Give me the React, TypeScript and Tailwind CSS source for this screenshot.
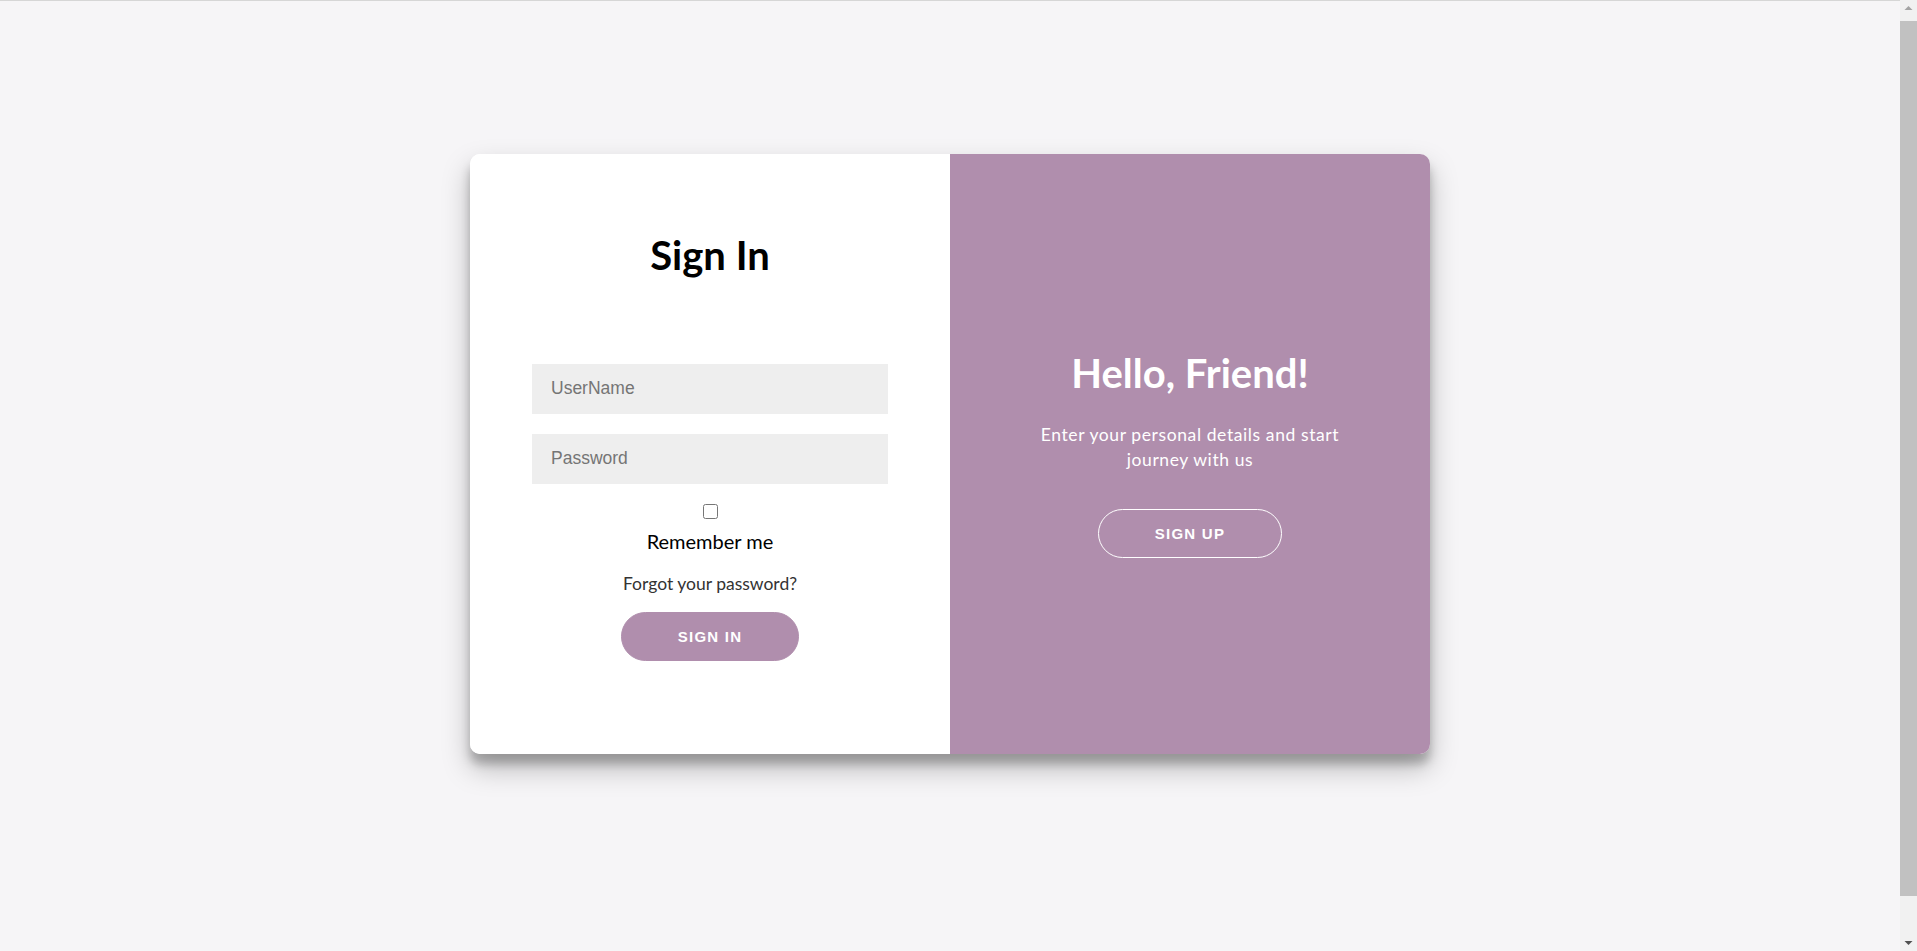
export default function App() {
  return (
    <div className="bg-[#f6f5f7] border-t border-[#d6d6d6] font-['Lato',sans-serif] pr-[17px] pb-[52px]">
      <div className="h-[951px] -mt-[23px] flex items-center justify-center">
        <div className="w-[960px] h-[600px] flex rounded-[10px] overflow-hidden bg-white shadow-[0_14px_28px_rgba(0,0,0,0.25),0_10px_10px_rgba(0,0,0,0.22)]">
          {/* sign in form */}
          <form className="w-1/2 h-full flex flex-col items-center pt-[77px] px-[62px] bg-white">
            <h1 className="text-[40px] leading-[48px] font-bold text-black">Sign In</h1>
            <input
              type="text"
              placeholder="UserName"
              className="mt-[85px] w-full h-[50px] bg-[#eee] px-[19px] text-[17.5px] font-['Liberation_Sans',Arial,sans-serif] text-[#333] placeholder:text-[#757575] outline-none"
            />
            <input
              type="password"
              placeholder="Password"
              className="mt-5 w-full h-[50px] bg-[#eee] px-[19px] text-[17.5px] font-['Liberation_Sans',Arial,sans-serif] text-[#333] placeholder:text-[#757575] outline-none"
            />
            <input type="checkbox" id="remember" className="mt-5 w-[15px] h-[15px]" />
            <label htmlFor="remember" className="mt-[10px] text-[20px] leading-6 text-black">
              Remember me
            </label>
            <a href="#" className="mt-5 text-[17.5px] leading-[21px] text-[#333]">
              Forgot your password?
            </a>
            <button
              type="button"
              className="mt-[18px] rounded-full bg-[#b08ead] border border-[#b08ead] px-[56px] py-[15px] text-[15px] leading-[17px] font-bold tracking-[1.25px] text-white uppercase font-['Liberation_Sans',Arial,sans-serif]"
            >
              Sign In
            </button>
          </form>

          {/* overlay panel */}
          <div className="w-1/2 h-full flex flex-col items-center justify-center px-[72px] bg-[#b08ead] text-white text-center">
            <h1 className="text-[40px] leading-[48px] font-bold">Hello, Friend!</h1>
            <p className="mt-[25px] text-[17.5px] leading-[25px] tracking-[0.6px]">
              Enter your personal details and start journey with us
            </p>
            <button
              type="button"
              className="mt-[37px] rounded-full bg-transparent border border-white px-[56px] py-[15px] text-[15px] leading-[17px] font-bold tracking-[1.25px] text-white uppercase font-['Liberation_Sans',Arial,sans-serif]"
            >
              Sign Up
            </button>
          </div>
        </div>
      </div>

      {/* window scrollbar */}
      <div className="fixed top-0 right-0 w-[17px] h-screen bg-[#f1f1f1] flex flex-col items-center">
        <svg width="17" height="17" viewBox="0 0 17 17" className="shrink-0">
          <path d="M4.5 10 L8.5 6 L12.5 10 Z" fill="#a3a3a3" />
        </svg>
        <div className="mt-[4px] w-full h-[875px] bg-[#c1c1c1]" />
        <div className="flex-1" />
        <svg width="17" height="17" viewBox="0 0 17 17" className="shrink-0">
          <path d="M4.5 7 L8.5 11 L12.5 7 Z" fill="#505050" />
        </svg>
      </div>
    </div>
  );
}
